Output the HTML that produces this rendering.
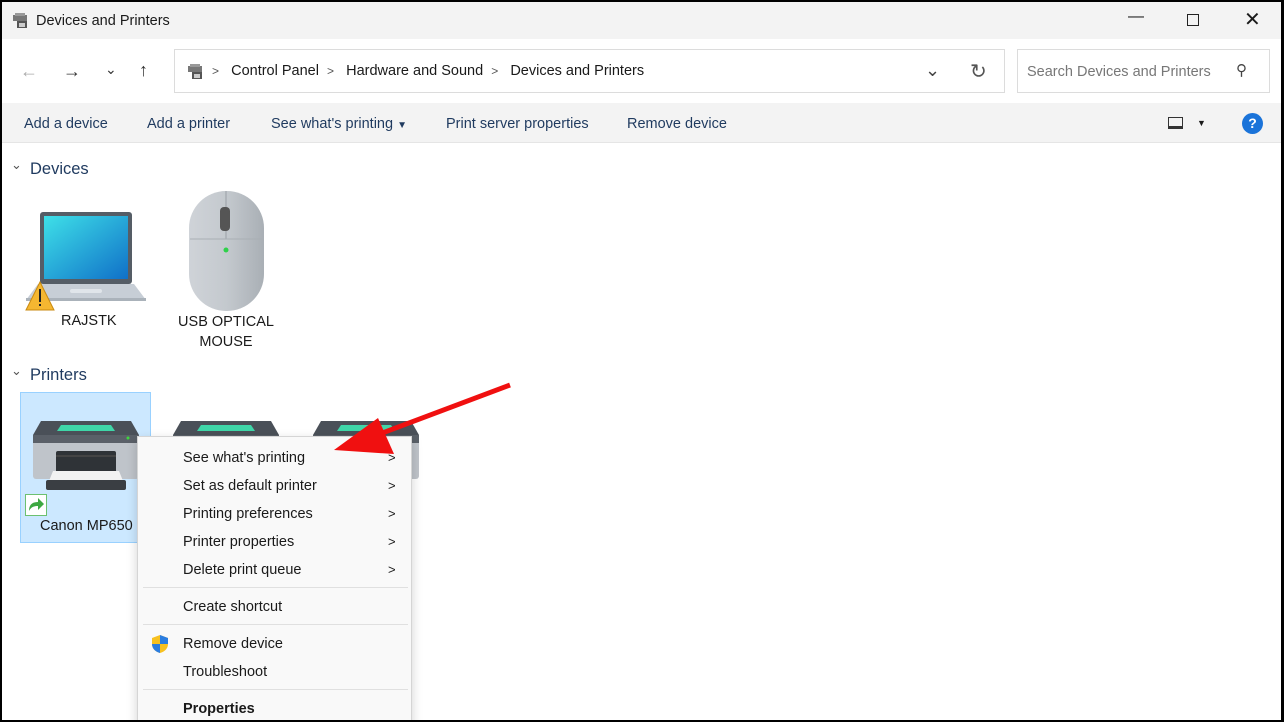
<!DOCTYPE html>
<html><head><style>
*{margin:0;padding:0;box-sizing:border-box}
body{width:1284px;height:722px;overflow:hidden;background:#000;font-family:"Segoe UI","Liberation Sans",sans-serif;font-size:15px;color:#1a1a1a;position:relative}
.win{position:absolute;left:2px;top:2px;width:1279px;height:718px;background:#fff;overflow:hidden}
.a{position:absolute;white-space:nowrap}
.title{left:0;top:0;width:100%;height:37px;background:#f3f3f3}
.tb{left:0;top:101px;width:100%;height:40px;background:#f3f3f3;border-bottom:1px solid #e5e5e5}
.addr{left:172px;top:47px;width:831px;height:44px;border:1px solid #dcdcdc;background:#fff}
.search{left:1015px;top:47px;width:253px;height:44px;border:1px solid #dcdcdc;background:#fff}
.menu{left:135px;top:434px;width:275px;height:300px;background:#f9f9f9;border:1px solid #d5d5d5;box-shadow:0 4px 10px rgba(0,0,0,.18)}
.mi{position:absolute;left:45px;font-size:14.5px}
.ar{position:absolute;left:250px;font-size:13px}
.sep{position:absolute;left:5px;width:265px;height:1px;background:#e0e0e0}
</style></head><body><div class="win">
<div class="a title"></div>
<svg class="a" style="left:10px;top:11px" width="18" height="16"><rect x="1" y="2" width="14" height="6" fill="#777"/><rect x="3" y="0" width="10" height="3" fill="#999"/><rect x="5" y="8" width="10" height="7" fill="#555"/><rect x="7" y="10" width="6" height="4" fill="#ccc"/></svg>
<div class="a" style="left:34px;top:11px;font-size:14.5px">Devices and Printers</div>
<div class="a" style="left:1126px;top:6px;font-size:16px">&#8212;</div>
<div class="a" style="left:1185px;top:12px;width:12px;height:12px;border:1.5px solid #222"></div>
<div class="a" style="left:1242px;top:5px;font-size:20px;font-weight:300">✕</div>
<div class="a" style="left:18px;top:59px;font-size:18px;color:#aaa">&#8592;</div>
<div class="a" style="left:61px;top:59px;font-size:18px;color:#333">&#8594;</div>
<div class="a" style="left:103px;top:59px;font-size:14px;color:#333">&#8964;</div>
<div class="a" style="left:137px;top:58px;font-size:18px;color:#333">&#8593;</div>
<div class="a addr"></div>
<svg class="a" style="left:185px;top:62px" width="18" height="16"><rect x="1" y="2" width="14" height="6" fill="#777"/><rect x="3" y="0" width="10" height="3" fill="#999"/><rect x="5" y="8" width="10" height="7" fill="#555"/><rect x="7" y="10" width="6" height="4" fill="#ccc"/></svg>
<div class="a" style="left:210px;top:61px;font-size:14.5px"><span style="color:#555;font-size:12px">&gt;</span>&nbsp;&nbsp; Control Panel &nbsp;<span style="color:#555;font-size:12px">&gt;</span>&nbsp;&nbsp; Hardware and Sound &nbsp;<span style="color:#555;font-size:12px">&gt;</span>&nbsp;&nbsp; Devices and Printers</div>
<div class="a" style="left:923px;top:58px;font-size:18px;color:#444">&#8964;</div>
<div class="a" style="left:968px;top:57px;font-size:20px;color:#555">&#8635;</div>
<div class="a search"></div>
<div class="a" style="left:1025px;top:62px;font-size:14.5px;color:#777">Search Devices and Printers</div>
<div class="a" style="left:1234px;top:59px;font-size:15px;color:#444">&#9906;</div>
<div class="a tb"></div>
<div class="a" style="left:22px;top:114px;font-size:14.5px;color:#1f3a5f">Add a device</div>
<div class="a" style="left:145px;top:114px;font-size:14.5px;color:#1f3a5f">Add a printer</div>
<div class="a" style="left:269px;top:114px;font-size:14.5px;color:#1f3a5f">See what's printing <span style="font-size:10px">&#9660;</span></div>
<div class="a" style="left:444px;top:114px;font-size:14.5px;color:#1f3a5f">Print server properties</div>
<div class="a" style="left:625px;top:114px;font-size:14.5px;color:#1f3a5f">Remove device</div>
<div class="a" style="left:1166px;top:115px;width:15px;height:12px;border:1.5px solid #333;border-bottom-width:3px"></div>
<div class="a" style="left:1195px;top:116px;font-size:9px">&#9660;</div>
<div class="a" style="left:1240px;top:111px;width:21px;height:21px;border-radius:50%;background:#1a73d9;color:#fff;font-weight:bold;text-align:center;font-size:14px;line-height:21px">?</div>
<div class="a" style="left:9px;top:155px;font-size:13px;color:#555">&#8964;</div>
<div class="a" style="left:28px;top:158px;font-size:16.5px;color:#1f3a5f">Devices</div>
<svg class="a" style="left:22px;top:208px" width="126" height="102">
<defs><linearGradient id="sc" x1="0" y1="0" x2="1" y2="1"><stop offset="0" stop-color="#3ee0e8"/><stop offset="1" stop-color="#1070c8"/></linearGradient></defs>
<rect x="16" y="2" width="92" height="72" rx="3" fill="#555d66"/><rect x="20" y="6" width="84" height="63" fill="url(#sc)"/>
<path d="M14 74 H110 L122 90 H2 Z" fill="#c7ced6"/><rect x="2" y="88" width="120" height="3" fill="#aab2ba"/><rect x="46" y="79" width="32" height="4" rx="2" fill="#e0e5ea"/>
<path d="M16 72 L30 100 H2 Z" fill="#f5b731" stroke="#c98a10"/><rect x="15" y="79" width="2" height="13" fill="#222"/><rect x="15" y="94" width="2" height="2" fill="#222"/></svg>
<div class="a" style="left:59px;top:311px;font-size:14.5px">RAJSTK</div>
<svg class="a" style="left:184px;top:187px" width="80" height="124"><defs><linearGradient id="ms" x1="0" x2="1"><stop offset="0" stop-color="#cfd3d8"/><stop offset=".5" stop-color="#c4c9ce"/><stop offset="1" stop-color="#a9afb5"/></linearGradient></defs>
<rect x="3" y="2" width="75" height="120" rx="37" fill="url(#ms)"/><line x1="40" y1="2" x2="40" y2="50" stroke="#9aa0a6"/><line x1="4" y1="50" x2="77" y2="50" stroke="#a9afb4"/><rect x="34" y="18" width="10" height="24" rx="4" fill="#555"/><circle cx="40" cy="61" r="2.5" fill="#2ed14a"/></svg>
<div class="a" style="left:166px;top:310px;font-size:14.5px;text-align:center;width:116px;white-space:normal;line-height:20px">USB OPTICAL<br>MOUSE</div>
<div class="a" style="left:9px;top:361px;font-size:13px;color:#555">&#8964;</div>
<div class="a" style="left:28px;top:364px;font-size:16.5px;color:#1f3a5f">Printers</div>
<div class="a" style="left:18px;top:390px;width:131px;height:151px;background:#cce8ff;border:1px solid #99d1ff"></div>
<svg width="0" height="0" style="position:absolute"><defs><g id="pr"><path d="M8 0 H98 L106 14 H0 Z" fill="#4a5058"/><path d="M28 4 H78 L82 10 H24 Z" fill="#3fd6a8"/><rect x="0" y="14" width="106" height="44" rx="3" fill="#bfc4ca"/><rect x="0" y="14" width="106" height="8" fill="#5a6068"/><circle cx="95" cy="17" r="1.5" fill="#3ed63e"/><rect x="23" y="30" width="60" height="26" rx="2" fill="#2f3337"/><rect x="23" y="34" width="60" height="2" fill="#444"/><path d="M20 50 H86 L90 60 H16 Z" fill="#f2f2f2"/><rect x="13" y="59" width="80" height="10" rx="2" fill="#3a3e43"/></g></defs></svg>
<svg class="a" style="left:31px;top:419px" width="108" height="72"><use href="#pr"/></svg>
<svg class="a" style="left:171px;top:419px" width="108" height="72"><use href="#pr"/></svg>
<svg class="a" style="left:311px;top:419px" width="108" height="72"><use href="#pr"/></svg>
<div class="a" style="left:23px;top:492px;width:22px;height:22px;border:1.5px solid #6cc070;background:#fff"><svg width="19" height="19"><path d="M3 16 C3 9 7 7 12 7 V3 L18 9 L12 15 V11 C8 11 5 12 3 16Z" fill="#3da842"/></svg></div>
<div class="a" style="left:38px;top:516px;font-size:14.5px">Canon MP650</div>
<div class="a menu">
<div class="mi" style="top:13px">See what's printing</div><div class="ar" style="top:13px">&gt;</div>
<div class="mi" style="top:41px">Set as default printer</div><div class="ar" style="top:41px">&gt;</div>
<div class="mi" style="top:69px">Printing preferences</div><div class="ar" style="top:69px">&gt;</div>
<div class="mi" style="top:97px">Printer properties</div><div class="ar" style="top:97px">&gt;</div>
<div class="mi" style="top:125px">Delete print queue</div><div class="ar" style="top:125px">&gt;</div>
<div class="sep" style="top:150px"></div>
<div class="mi" style="top:162px">Create shortcut</div>
<div class="sep" style="top:187px"></div>
<svg style="position:absolute;left:12px;top:197px" width="20" height="20"><path d="M10 1 L18 4 V10 C18 15 14 18 10 19 C6 18 2 15 2 10 V4 Z" fill="#f7c120"/><path d="M10 1 L18 4 V10 H10 Z M2 10 H10 V19 C6 18 2 15 2 10Z" fill="#2a7de1"/></svg>
<div class="mi" style="top:199px">Remove device</div>
<div class="mi" style="top:227px">Troubleshoot</div>
<div class="sep" style="top:252px"></div>
<div class="mi" style="top:264px;font-weight:bold">Properties</div>
</div>
<svg class="a" style="left:0;top:0" width="1279" height="718"><line x1="508" y1="383" x2="375" y2="433" stroke="#f01010" stroke-width="5"/><path d="M332 448 L376 416 L392 452 Z" fill="#f01010"/></svg>
</div></body></html>
